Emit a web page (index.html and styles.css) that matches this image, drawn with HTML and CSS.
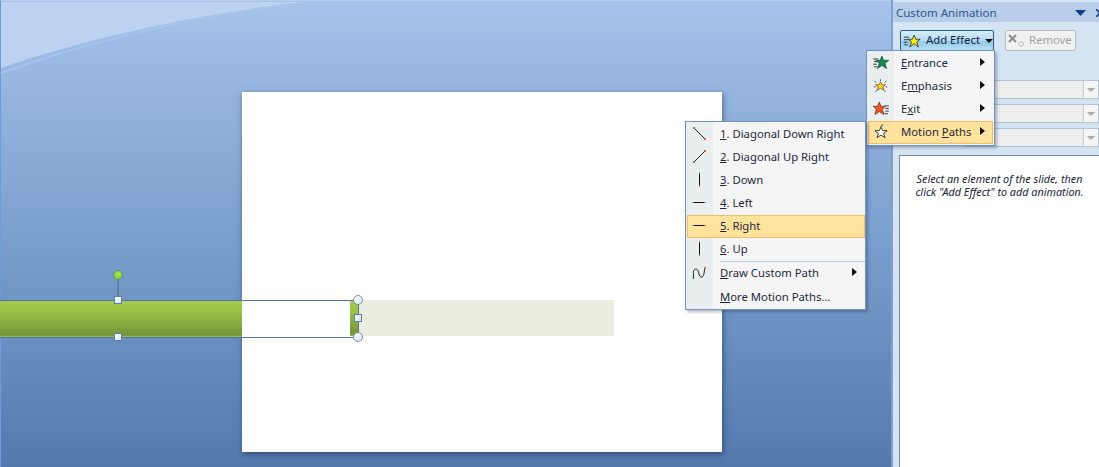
FILE: index.html
```html
<!DOCTYPE html>
<html lang="en">
<head>
<meta charset="utf-8">
<title>Custom Animation</title>
<link rel="stylesheet" href="styles.css">
</head>
<body>
<div class="app">
  <main class="workspace">
    <svg class="swoosh" width="320" height="75" viewBox="0 0 320 75"><path d="M1 1H303C200 13 90 36 1 67Z" fill="#bbd2f0"/><path d="M1 72C90 40 190 17 290 3" fill="none" stroke="#a9c5ea" stroke-width="1.5"/></svg>
    <div class="slide">
      <div class="pale-bar"></div>
    </div>
    <div class="bar bar-off"></div>
    <div class="bar bar-end"></div>
    <div class="selection"></div>
    <div class="stem"></div>
    <div class="rotate"></div>
    <div class="handle h-top"></div>
    <div class="handle h-bottom"></div>
    <div class="handle h-right"></div>
    <div class="handle round r-top"></div>
    <div class="handle round r-bottom"></div>
  </main>

  <aside class="pane">
    <header class="pane-title">
      <span class="pane-name">Custom Animation</span>
      <svg class="pane-arrow" width="11" height="6" viewBox="0 0 11 6"><path d="M0 0H11L5.5 6Z" fill="#123f8a"/></svg>
      <svg class="pane-close" width="4" height="8" viewBox="0 0 4 8"><path d="M0 0L4 4L0 8" fill="none" stroke="#123f8a" stroke-width="1.6"/></svg>
    </header>
    <div class="pane-tools">
      <button class="btn btn-add">
        <svg class="btn-icon" width="18" height="14" viewBox="0 0 21 16"><path d="M1 3.500H7M1 6.500H6M1 9.500H5M1 12.500H6" stroke="#222" fill="none"/><path d="M13 1L15 6H20L16 9L18 15L13 11L8 15L10 9L6 6H11Z" fill="#fff200" stroke="#333"/></svg>
        <span class="btn-text">Add Effect</span>
        <i class="caret"></i>
      </button>
      <button class="btn btn-remove">
        <svg class="btn-icon" width="20" height="16" viewBox="0 0 20 16"><path d="M2 2L9 9M9 2L2 9" stroke="#8d8d8d" stroke-width="2"/><path d="M11 11L13 9H15L17 11L15 13H13Z" fill="none" stroke="#bbb"/></svg>
        <span class="btn-text">Remove</span>
      </button>
    </div>
    <div class="fields">
      <div class="field"><i class="drop"></i></div>
      <div class="field"><i class="drop"></i></div>
      <div class="field"><i class="drop"></i></div>
    </div>
    <div class="list">
      <p>Select an element of the slide, then<br>click "Add Effect" to add animation.</p>
    </div>
  </aside>

  <nav class="menu menu-effect">
    <div class="item">
      <span class="ico"><svg width="16" height="13" viewBox="0 0 18 15"><path d="M0 3.500H6M1 6.500H5M0 9.500H4M1 12.500H5" stroke="#222"/><path d="M10 0L12 5H18L13.500 8.500L15.500 14.500L10 11L5 14.500L7 8.500L3 5H8Z" fill="#0f8a50" stroke="#24493a" stroke-width=".8"/></svg></span>
      <span class="lbl"><u>E</u>ntrance</span><i class="sub"></i>
    </div>
    <div class="item">
      <span class="ico"><svg width="15" height="14" viewBox="0 0 18 16"><path d="M9 0V2M2 2L4 4M16 2L14 4M1 9H3M15 9H17M3 15L5 13M15 15L13 13" stroke="#333"/><path d="M9 3L10.800 6.500H15L11.800 9L13 13L9 10.800L5 13L6.200 9L3 6.500H7.200Z" fill="#ffd21c" stroke="#5a4a10" stroke-width=".8"/></svg></span>
      <span class="lbl">E<u>m</u>phasis</span><i class="sub"></i>
    </div>
    <div class="item">
      <span class="ico"><svg width="16" height="13" viewBox="0 0 18 15"><path d="M13 4.500H18M14 7.500H18M14 10.500H18M13 13.500H17" stroke="#222"/><path d="M7 0L9 5H14L10.500 8.500L12.500 14.500L7 11L2 14.500L3.500 8.500L0 5H5Z" fill="#f4502a" stroke="#6b2a1b" stroke-width=".8"/></svg></span>
      <span class="lbl">E<u>x</u>it</span><i class="sub"></i>
    </div>
    <div class="item active">
      <span class="ico"><svg width="14" height="15" viewBox="0 0 16 16"><path d="M8 3L10 7H15L11 10L12.500 15L8 12L3.500 15L5 10L1 7H6Z" fill="#fff" stroke="#222"/><path d="M8 3L10 0" stroke="#5f8a88" stroke-width="2"/></svg></span>
      <span class="lbl">Motion <u>P</u>aths</span><i class="sub"></i>
    </div>
  </nav>

  <nav class="menu menu-paths">
    <div class="item">
      <span class="ico"><svg width="13" height="13" viewBox="0 0 14 14"><path d="M1 1L13 13" stroke="#111"/><path d="M0 0h2v2h-2z" fill="#3d9a6a"/><path d="M12 12h2v2h-2z" fill="#d9583c"/></svg></span>
      <span class="lbl"><u>1</u>. Diagonal Down Right</span>
    </div>
    <div class="item">
      <span class="ico"><svg width="13" height="13" viewBox="0 0 14 14"><path d="M1 13L13 1" stroke="#111"/><path d="M0 12h2v2h-2z" fill="#3d9a6a"/><path d="M12 0h2v2h-2z" fill="#d9583c"/></svg></span>
      <span class="lbl"><u>2</u>. Diagonal Up Right</span>
    </div>
    <div class="item">
      <span class="ico"><svg width="3" height="15" viewBox="0 0 3 15"><path d="M1.500 1V14" stroke="#111"/><path d="M1 0h1v2h-1z" fill="#3d9a6a"/><path d="M1 13h1v2h-1z" fill="#d9583c"/></svg></span>
      <span class="lbl"><u>3</u>. Down</span>
    </div>
    <div class="item">
      <span class="ico"><svg width="14" height="3" viewBox="0 0 14 3"><path d="M1 1.500H13" stroke="#111"/><path d="M0 1h2v1h-2z" fill="#d9583c"/><path d="M12 1h2v1h-2z" fill="#3d9a6a"/></svg></span>
      <span class="lbl"><u>4</u>. Left</span>
    </div>
    <div class="item active">
      <span class="ico"><svg width="14" height="3" viewBox="0 0 14 3"><path d="M1 1.500H13" stroke="#111"/><path d="M0 1h2v1h-2z" fill="#3d9a6a"/><path d="M12 1h2v1h-2z" fill="#d9583c"/></svg></span>
      <span class="lbl"><u>5</u>. Right</span>
    </div>
    <div class="item">
      <span class="ico"><svg width="3" height="15" viewBox="0 0 3 15"><path d="M1.500 1V14" stroke="#111"/><path d="M1 0h1v2h-1z" fill="#d9583c"/><path d="M1 13h1v2h-1z" fill="#3d9a6a"/></svg></span>
      <span class="lbl"><u>6</u>. Up</span>
    </div>
    <div class="sep"></div>
    <div class="item">
      <span class="ico"><svg width="15" height="14" viewBox="0 0 16 15"><path d="M1.500 13V7C1.500 3 5 2 6.500 5C7.500 8 8 12 10 12C12.500 12 13 8 13.500 3" fill="none" stroke="#111"/><path d="M.5 12h2v2h-2z" fill="#3d9a6a"/><path d="M13 1h2v2h-2z" fill="#d9583c"/></svg></span>
      <span class="lbl"><u>D</u>raw Custom Path</span><i class="sub"></i>
    </div>
    <div class="item item-last">
      <span class="ico"></span>
      <span class="lbl"><u>M</u>ore Motion Paths...</span>
    </div>
  </nav>
</div>
</body>
</html>
```
FILE: styles.css
```css
* { box-sizing: border-box; }
html, body { margin: 0; padding: 0; }
body { background: #fff; font-family: "Noto Sans", "DejaVu Sans", sans-serif; font-size: 11.3px; color: #1e2a3c; }
.app { position: relative; display: flex; width: 1099px; height: 467px; overflow: hidden; }

.workspace { position: relative; flex: 0 0 891px; height: 467px; border-left: 1px solid #6f9ae0; border-top: 1px solid #b7cdee; background: linear-gradient(180deg, #a5c3ea 0%, #93b3de 22%, #7197c7 62%, #5479ad 100%); }
.swoosh { position: absolute; left: -1px; top: 0; }
.slide { position: absolute; left: 241px; top: 91px; width: 480px; height: 360px; background: #fff; box-shadow: 1px 2px 6px rgba(20, 35, 70, .55); }
.pale-bar { position: absolute; left: 117px; top: 208px; width: 255px; height: 36px; background: #eaeddf; }
.bar { position: absolute; background: linear-gradient(180deg, #a5cd4b 0%, #9cc146 30%, #759335 95%, #a8c45c 100%); }
.bar-off { left: -1px; top: 300px; width: 242px; height: 36px; }
.bar-end { left: 349px; top: 300px; width: 9px; height: 35px; }
.selection { position: absolute; left: -2px; top: 299px; width: 360px; height: 38px; border: 1px solid #4f76a4; }
.stem { position: absolute; left: 116px; top: 274px; width: 2px; height: 25px; background: #5f7fa8; }
.rotate { position: absolute; left: 112px; top: 269px; width: 10px; height: 10px; border-radius: 50%; background: radial-gradient(circle at 50% 40%, #a4ef52, #6ac22a); border: 1px solid #6f8c78; }
.handle { position: absolute; width: 8px; height: 8px; background: linear-gradient(135deg, #fff, #cfe7f4); border: 1px solid #5f7fa8; }
.h-top { left: 113px; top: 295px; }
.h-bottom { left: 113px; top: 332px; }
.h-right { left: 353px; top: 313px; }
.round { width: 10px; height: 10px; border-radius: 50%; border-color: #7f8e9e; }
.r-top { left: 352px; top: 294px; }
.r-bottom { left: 352px; top: 331px; }

.pane { flex: 1; display: flex; flex-direction: column; height: 467px; background: #d5e4f3; border-left: 2px solid #7ea0cd; padding-top: 2px; overflow: hidden; }
.pane-title { display: flex; align-items: center; height: 20px; padding: 1px 0 0 3px; background: #b8cee8; color: #2f5596; font-size: 11.5px; }
.pane-name { flex: 1; }
.pane-arrow { margin-right: 10px; }
.pane-close { margin-right: -1px; }
.pane-tools { display: flex; gap: 11px; padding: 8px 0 0 7px; height: 58px; }
.btn { display: flex; align-items: center; flex: none; height: 21px; font: inherit; padding: 0; border-radius: 2px; }
.btn-icon { flex: none; }
.btn-text { white-space: nowrap; padding-bottom: 2px; }
.btn-add { width: 94px; padding-left: 2px; gap: 5px; color: #10223a; border: 1px solid #2c5c80; background: linear-gradient(180deg, #d5edf9 0%, #b6dcf2 50%, #8fc8ea 55%, #b9e0f5 100%); }
.caret { flex: none; margin: 0 2px 0 auto; border: 4px solid transparent; border-top: 4px solid #111; border-bottom: 0; }
.btn-remove { width: 71px; padding-left: 1px; gap: 2px; color: #a3a3a3; border: 1px solid #b9b9b9; background: #eff1f2; }
.fields { display: flex; flex-direction: column; gap: 5px; padding-left: 70px; }
.field { display: flex; justify-content: flex-end; height: 19px; background: #eeeeee; border: 1px solid #b4c4d6; }
.drop { position: relative; width: 15px; background: #f5f5f5; border-left: 1px solid #ccc; }
.drop::after { content: ""; position: absolute; left: 3px; top: 7px; border: 4px solid transparent; border-top: 4px solid #a8a8a8; border-bottom: 0; }
.list { flex: 1; margin: 8px 0 0 6px; background: #fff; border: 1px solid #7f8a99; border-right: 0; border-bottom: 0; }
.list p { margin: 16px 0 0 14px; width: 171px; text-align: center; font-size: 10.8px; line-height: 13px; font-style: italic; color: #1a2436; white-space: nowrap; }

.menu { position: absolute; display: flex; flex-direction: column; padding: 1px; background: linear-gradient(90deg, #e9eeee 27px, #f5f5f5 27px); border: 1px solid #6f94c2; box-shadow: 2px 2px 3px rgba(40, 50, 80, .35); }
.menu-effect { left: 866px; top: 50px; width: 129px; height: 96px; }
.menu-paths { left: 685px; top: 121px; width: 181px; height: 189px; padding-right: 0; }
.menu-paths .ico { padding-right: 2px; }
.item { position: relative; display: flex; align-items: center; height: 23px; flex: none; border: 1px solid transparent; }
.item.active { background: #ffe29c; border-color: #f3bd66; }
.item-last { margin-top: 1px; }
.ico { display: flex; align-items: center; justify-content: center; width: 24px; height: 21px; flex: none; padding: 0 1px 2px 0; }
.lbl { padding: 0 0 3px 8px; white-space: nowrap; }
.sub { position: absolute; right: 7px; top: 5px; border: 4px solid transparent; border-left: 5px solid #111; border-right: 0; }
.sep { height: 1px; margin-left: 33px; flex: none; background: #b9cfe8; }
```
